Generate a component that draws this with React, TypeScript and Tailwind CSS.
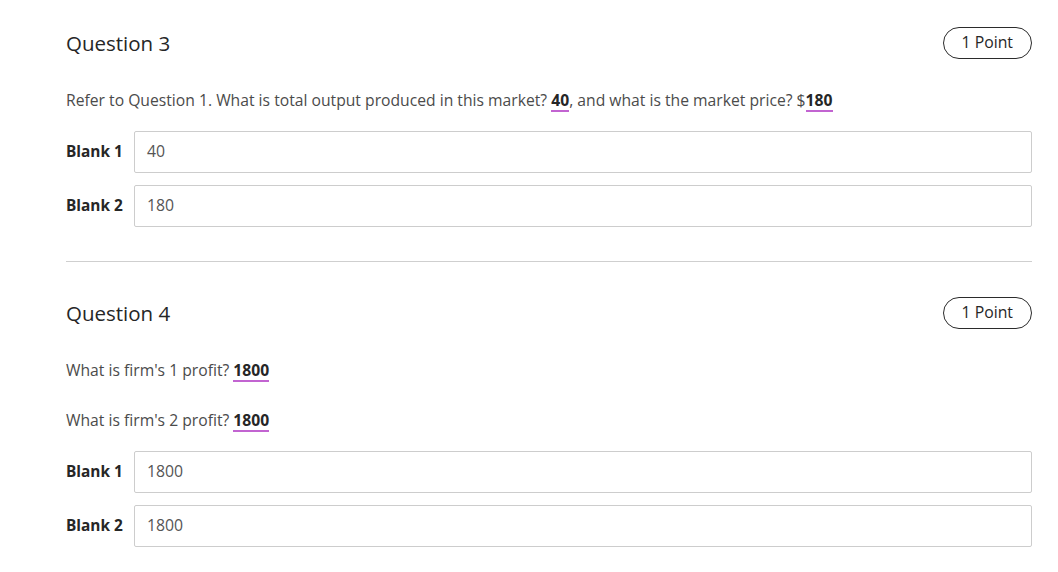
import React from 'react';

// Quiz review — two fill-in-the-blank questions.

type Blank = { label: string; value: string };

function PointBadge() {
  return (
    <span className="h-8 px-[18px] inline-flex items-center rounded-full border border-[#2b2b2b] text-[15.8px] text-[#262626]">
      1 Point
    </span>
  );
}

function Answer({ children }: { children: React.ReactNode }) {
  return (
    <span className="inline-block leading-[20px] font-bold text-[#262626] border-b-2 border-[#c264d1]">
      {children}
    </span>
  );
}

function Blanks({ items }: { items: Blank[] }) {
  return (
    <div className="flex flex-col gap-3">
      {items.map((b) => (
        <div key={b.label} className="flex items-center">
          <span className="w-[68px] shrink-0 text-[15.4px] font-bold text-[#262626]">{b.label}</span>
          <div className="flex-1 h-[42px] flex items-center px-3 rounded-[2px] border border-[#cdcdcd] bg-white text-[15.8px] text-[#555]">
            {b.value}
          </div>
        </div>
      ))}
    </div>
  );
}

function Heading({ title }: { title: string }) {
  return (
    <div className="flex items-center justify-between h-8">
      <h2 className="text-[20.5px] text-[#262626]">{title}</h2>
      <PointBadge />
    </div>
  );
}

export default function App() {
  return (
    <div
      className="min-h-screen bg-white pl-[66px] pr-[26px] pt-[27px] text-[15.7px] text-[#4b4b4b]"
      style={{ fontFamily: '"Open Sans", "Liberation Sans", sans-serif' }}
    >
      {/* Question 3 */}
      <section>
        <Heading title="Question 3" />
        <p className="mt-[29px] leading-6">
          Refer to Question 1. What is total output produced in this market? <Answer>40</Answer>, and what is
          the market price? $<Answer>180</Answer>
        </p>
        <div className="mt-[19px]">
          <Blanks items={[{ label: 'Blank 1', value: '40' }, { label: 'Blank 2', value: '180' }]} />
        </div>
      </section>

      <div className="mt-[34px] mb-[35px] h-px bg-[#cfcfcf]" />

      {/* Question 4 */}
      <section>
        <Heading title="Question 4" />
        <p className="mt-[29px] leading-6">
          What is firm's 1 profit? <Answer>1800</Answer>
        </p>
        <p className="mt-[26px] leading-6">
          What is firm's 2 profit? <Answer>1800</Answer>
        </p>
        <div className="mt-[19px]">
          <Blanks items={[{ label: 'Blank 1', value: '1800' }, { label: 'Blank 2', value: '1800' }]} />
        </div>
      </section>
    </div>
  );
}
